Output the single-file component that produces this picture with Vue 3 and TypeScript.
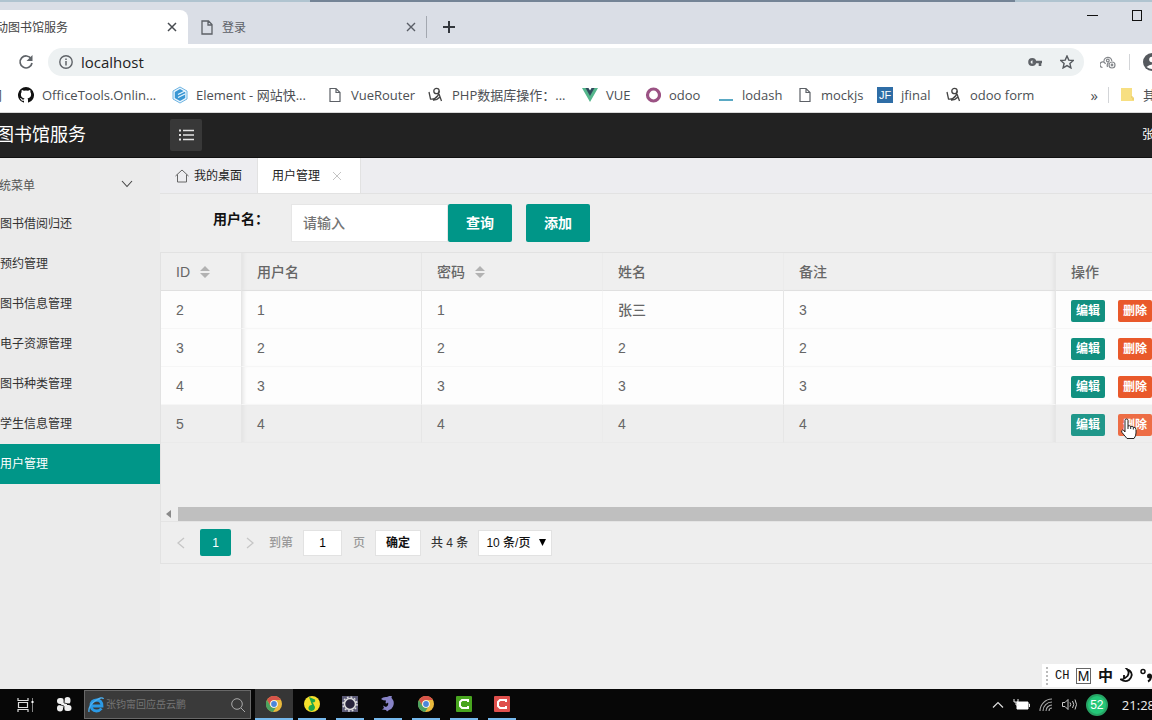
<script setup lang="ts">
import { ref } from 'vue'

interface Bookmark { icon: string; label: string }
interface User { id: number; username: string; password: string; name: string; remark: string }

const bookmarks: Bookmark[] = [
  { icon: 'github', label: 'OfficeTools.Onlin...' },
  { icon: 'element', label: 'Element - 网站快...' },
  { icon: 'page', label: 'VueRouter' },
  { icon: 'sketch', label: 'PHP数据库操作：...' },
  { icon: 'vue', label: 'VUE' },
  { icon: 'ring', label: 'odoo' },
  { icon: 'dash', label: 'lodash' },
  { icon: 'page', label: 'mockjs' },
  { icon: 'jf', label: 'jfinal' },
  { icon: 'sketch', label: 'odoo form' },
]

const menu: string[] = ['图书借阅归还', '预约管理', '图书信息管理', '电子资源管理', '图书种类管理', '学生信息管理', '用户管理']
const activeMenu = ref('用户管理')

const users: User[] = [
  { id: 2, username: '1', password: '1', name: '张三', remark: '3' },
  { id: 3, username: '2', password: '2', name: '2', remark: '2' },
  { id: 4, username: '3', password: '3', name: '3', remark: '3' },
  { id: 5, username: '4', password: '4', name: '4', remark: '4' },
]
const hoveredId = ref(5)
const keyword = ref('')
const page = ref('1')
const pageSize = ref('10')
const tasks: string[] = ['chrome', 'music', 'gear', 'dolphin', 'chrome', 'camgreen', 'camred']
</script>

<template>
  <div class="desktop">
    <header class="tabstrip">
      <div class="btab current">
        <span class="btitle">动图书馆服务</span>
        <button class="plain" aria-label="关闭标签页"><svg width="10" height="10" viewBox="0 0 10 10"><path d="M1 1l8 8M9 1l-8 8" stroke="#474b50" stroke-width="1.5" /></svg></button>
      </div>
      <div class="btab other">
        <svg width="12" height="15" viewBox="0 0 12 15"><path d="M1 1h6.500l3.500 3.500v9.500H1zM7 1v4h4" fill="none" stroke="#5c6066" stroke-width="1.3" /></svg>
        <span class="btitle">登录</span>
        <button class="plain" aria-label="关闭标签页"><svg width="10" height="10" viewBox="0 0 10 10"><path d="M1 1l8 8M9 1l-8 8" stroke="#5a5e66" stroke-width="1.4" /></svg></button>
      </div>
      <button class="plain newtab" aria-label="新标签页"><svg width="12" height="12" viewBox="0 0 12 12"><path d="M6 0v12M0 6h12" stroke="#33373d" stroke-width="2" /></svg></button>
      <div class="winbtns">
        <button class="plain" aria-label="最小化"><svg width="11" height="11" viewBox="0 0 11 11"><path d="M0 5.500h11" stroke="#111" /></svg></button>
        <button class="plain" aria-label="最大化"><svg width="11" height="11" viewBox="0 0 11 11"><rect x=".5" y=".5" width="9" height="10" fill="none" stroke="#111" /></svg></button>
      </div>
    </header>

    <div class="toolbar">
      <button class="plain reload" aria-label="重新加载"><svg width="16" height="16" viewBox="0 0 16 16"><path d="M13.200 4.800A6 6 0 1 0 14 9" fill="none" stroke="#5f6368" stroke-width="1.700" /><path d="M14.500 1v6h-6z" fill="#5f6368" /></svg></button>
      <div class="omnibox">
        <svg width="14" height="14" viewBox="0 0 14 14"><circle cx="7" cy="7" r="6.200" fill="none" stroke="#5f6368" stroke-width="1.400" /><path d="M7 6v4.500M7 3.500v1.500" stroke="#5f6368" stroke-width="1.500" /></svg>
        <input aria-label="地址" value="localhost" />
        <svg width="15" height="10" viewBox="0 0 15 10"><path d="M4.500 5H14M12 5v4" stroke="#5f6368" stroke-width="2.600" fill="none" /><circle cx="4.200" cy="5" r="2.800" fill="none" stroke="#5f6368" stroke-width="2.400" /></svg>
        <svg width="14" height="14" viewBox="0 0 14 14"><path d="M7 1l1.800 4.100 4.500.400-3.400 3 1 4.400L7 10.600l-3.900 2.300 1-4.400-3.400-3 4.500-.400z" fill="none" stroke="#55595e" stroke-width="1.400" /></svg>
      </div>
      <svg class="ext" width="16" height="13" viewBox="0 0 16 13"><g fill="none" stroke="#85888c" stroke-width="1.200"><path d="M2.500 11.500a2.800 2.800 0 1 1 3-3.500M4 5.500a3.800 3.800 0 0 1 7.800-.500" /><circle cx="7.800" cy="4.500" r="1.400" /><circle cx="12" cy="9" r="3" /><circle cx="12" cy="9" r=".8" /><path d="M8.500 6.500a4 4 0 0 0-1 4.500" /></g></svg>
      <span class="vsep"></span>
      <svg class="avatar" width="18" height="18" viewBox="0 0 18 18"><circle cx="9" cy="9" r="9" fill="#55595e" /><circle cx="9" cy="6.500" r="2.800" fill="#fff" /><path d="M3.500 14q5.500-5 11 0q-5 4-11 0" fill="#fff" /></svg>
    </div>

    <nav class="bookmarks">
      <span class="cutmark">网</span>
      <div class="marks">
        <a v-for="b in bookmarks" :key="b.label" href="#" class="mark">
          <svg width="16" height="18" viewBox="0 0 16 18">
            <path v-if="b.icon === 'github'" transform="translate(0 1)" d="M8 0a8 8 0 0 0-2.500 15.600c.4.100.500-.200.500-.400v-1.500c-2 .400-2.600-.500-2.800-1-.1-.200-.500-1-.900-1.200-.300-.200-.700-.600 0-.600s1.100.600 1.300.8c.700 1.200 1.900.9 2.400.700.100-.500.300-.9.500-1.100-1.800-.200-3.600-.9-3.600-4 0-.9.300-1.600.800-2.200-.100-.200-.400-1 .100-2.100 0 0 .700-.200 2.200.8a7.600 7.600 0 0 1 4 0c1.500-1 2.200-.8 2.200-.8.400 1.100.200 1.900.100 2.100.500.600.8 1.300.8 2.200 0 3.100-1.900 3.800-3.700 4 .300.200.600.7.600 1.500v2.400c0 .200.100.5.500.4A8 8 0 0 0 8 0z" fill="#111" />
            <g v-else-if="b.icon === 'element'"><path d="M8 1l7 4v8l-7 4-7-4V5z" fill="#eaf5fd" stroke="#6db4e3" /><path d="M8 3l5.200 3v6L8 15l-5.200-3V6z" fill="#3a97d4" /><path d="M6 8.500l7-3.500M6 11.500l7-3.500" stroke="#eaf5fd" stroke-width="1.200" /></g>
            <path v-else-if="b.icon === 'page'" d="M3 2.500h6l4 4v9H3zM9 2.500v4h4" fill="none" stroke="#5c6066" stroke-width="1.200" />
            <g v-else-if="b.icon === 'sketch'" fill="none" stroke="#444" stroke-width="1.300"><circle cx="8.500" cy="5" r="2.700" /><path d="M1 6l1.500 7q4 1 7.500-3.500L11.200 5M11 8l2.500 7M5 14q4 .3 7-3" /></g>
            <g v-else-if="b.icon === 'vue'"><path d="M0 2h4l4 6.500L12 2h4L8 16z" fill="#55b68c" /><path d="M3.500 2H6.500L8 4.500 9.500 2h3L8 10z" fill="#2f4b5c" /></g>
            <circle v-else-if="b.icon === 'ring'" cx="8.500" cy="9" r="6" fill="none" stroke="#9b5284" stroke-width="3.200" />
            <path v-else-if="b.icon === 'dash'" d="M1 14h14" stroke="#5aa9c4" stroke-width="2" />
            <g v-else><rect y="1" width="16" height="16" fill="#2e6da6" /><text x="2" y="13" font-size="11" fill="#fff" font-family="Liberation Sans, sans-serif">JF</text></g>
          </svg>
          <span>{{ b.label }}</span>
        </a>
      </div>
      <button class="plain more" aria-label="更多书签">»</button>
      <span class="vsep"></span>
      <a href="#" class="mark folder"><svg width="13" height="15" viewBox="0 0 13 15"><path d="M0 1h11v10h2v3H0z" fill="#f7df82" /><path d="M10 10h2v3" fill="none" stroke="#e6c65a" /></svg><span>其</span></a>
    </nav>

    <header class="apphead">
      <h1>图书馆服务</h1>
      <button class="toggle" aria-label="折叠菜单"><svg width="15" height="12" viewBox="0 0 15 12"><path d="M4 1.500h11M4 6h11M4 10.500h11" stroke="#e4e4e4" stroke-width="1.500" /><path d="M0 1.500h2M0 6h2M0 10.500h2" stroke="#e4e4e4" stroke-width="2" /></svg></button>
      <span class="who">张</span>
    </header>

    <div class="main">
      <aside class="sidebar">
        <button class="group"><span>统菜单</span><svg width="12" height="8" viewBox="0 0 12 8"><path d="M1 1l5 5.500L11 1" fill="none" stroke="#444" stroke-width="1.100" /></svg></button>
        <a v-for="m in menu" :key="m" href="#" :class="{ active: m === activeMenu }" @click.prevent="activeMenu = m">{{ m }}</a>
      </aside>

      <main class="content">
        <div class="pagetabs">
          <a href="#" class="ptab"><svg width="14" height="14" viewBox="0 0 14 14"><path d="M.5 7L7 1l6.500 6M2.500 5.500v7.500h9V5.500" fill="none" stroke="#666" /></svg>我的桌面</a>
          <div class="ptab on">用户管理<button class="plain" aria-label="关闭"><svg width="10" height="10" viewBox="0 0 10 10"><path d="M1 1l8 8M9 1l-8 8" stroke="#c4c4c4" /></svg></button></div>
        </div>

        <form class="search" @submit.prevent>
          <label for="kw">用户名：</label>
          <input id="kw" v-model="keyword" placeholder="请输入" />
          <button class="btn query">查询</button>
          <button type="button" class="btn">添加</button>
        </form>

        <section class="grid">
          <div class="viewport">
            <table>
              <thead>
                <tr>
                  <th class="c-id">ID<svg width="10" height="12" viewBox="0 0 10 12"><path d="M0 5l5-5 5 5zM0 7l5 5 5-5z" fill="#b2b2b2" /></svg></th>
                  <th class="c-user first">用户名</th>
                  <th class="c-mid">密码<svg width="10" height="12" viewBox="0 0 10 12"><path d="M0 5l5-5 5 5zM0 7l5 5 5-5z" fill="#b2b2b2" /></svg></th>
                  <th class="c-mid">姓名</th>
                  <th class="c-rest">备注</th>
                  <th class="c-op">操作</th>
                </tr>
              </thead>
              <tbody>
                <tr v-for="u in users" :key="u.id" :class="{ hover: u.id === hoveredId }">
                  <td class="c-id">{{ u.id }}</td>
                  <td class="first">{{ u.username }}</td>
                  <td class="soft">{{ u.password }}</td>
                  <td>{{ u.name }}</td>
                  <td class="c-rest">{{ u.remark }}</td>
                  <td class="c-op">
                    <div class="ops">
                      <button class="mini edit">编辑</button>
                      <button class="mini del">删除</button>
                      <svg v-if="u.id === hoveredId" class="pointer" width="18" height="22" viewBox="0 0 18 22"><path d="M5 13V2.500a1.500 1.500 0 0 1 3 0V8q1.500-.800 2.700.500 1.500-.700 2.600.600 2.700-.200 2.700 2.400v3.500q0 3-2 5.500H7L2 14.500q-1.200-2 .5-2.500 1-.2 2.500 2z" fill="#fff" stroke="#222" /><path d="M8 8v3M10.700 8.500V11M13.300 9.200V11.500" stroke="#222" /></svg>
                    </div>
                  </td>
                </tr>
              </tbody>
            </table>
          </div>
          <div class="hscroll"><svg width="5" height="8" viewBox="0 0 5 8"><path d="M5 0v8L0 4z" fill="#8a8a8a" /></svg><span class="thumb"></span></div>
          <div class="pager">
            <button class="plain arrow" aria-label="上一页"><svg width="8" height="12" viewBox="0 0 8 12"><path d="M7 1L1 6l6 5" fill="none" stroke="#c6c6c6" stroke-width="1.300" /></svg></button>
            <button class="cur">1</button>
            <button class="plain arrow" aria-label="下一页"><svg width="8" height="12" viewBox="0 0 8 12"><path d="M1 1l6 5-6 5" fill="none" stroke="#c6c6c6" stroke-width="1.300" /></svg></button>
            <label for="pg">到第</label>
            <input id="pg" v-model="page" />
            <span class="unit">页</span>
            <button class="ok">确定</button>
            <span class="total">共 4 条</span>
            <span class="size">
              <select v-model="pageSize" aria-label="每页条数"><option value="10">10 条/页</option><option value="20">20 条/页</option></select>
              <svg width="7" height="7" viewBox="0 0 7 7"><path d="M0 0h7L3.500 7z" fill="#000" /></svg>
            </span>
          </div>
        </section>
      </main>
    </div>

    <div class="ime">
      <span class="grip"></span><span class="ch">CH</span><span class="m">M</span><b>中</b>
      <svg width="13" height="15" viewBox="0 0 13 15"><path d="M7 1q3 3 .500 7Q5 11 1 11.500q4 3 8 .500 5-5 1-9Q9 1.500 7 1zM4 7v4" fill="none" stroke="#111" stroke-width="1.800" /></svg>
      <svg width="12" height="15" viewBox="0 0 12 15"><circle cx="3" cy="3.500" r="2" fill="none" stroke="#111" stroke-width="1.500" /><circle cx="9.500" cy="8" r="2.500" fill="#111" /><path d="M11 8q0 4-3 5.500" stroke="#111" stroke-width="2" fill="none" /></svg>
    </div>

    <footer class="taskbar">
      <button class="plain" aria-label="任务视图"><svg width="18" height="16" viewBox="0 0 18 16"><path d="M1 1v2.500h10V1M1 15v-2.500h10V15M1.500 5.500h9v5h-9z" fill="none" stroke="#ddd" stroke-width="1.200" /><path d="M15.500 1v14" stroke="#888" /><path d="M14.500 5h2" stroke="#fff" stroke-width="2" /></svg></button>
      <button class="plain pin" aria-label="应用"><svg width="16" height="15" viewBox="0 0 16 15"><g fill="#eee"><rect x="1" y="1" width="7" height="6" rx="3" /><rect x="8.500" y="0" width="6" height="7" rx="3" /><rect x="1" y="8" width="6" height="6.500" rx="3" /><rect x="8" y="8" width="7.500" height="6" rx="3" /><circle cx="8" cy="7.500" r="3" /></g><path d="M8 2v4l5 1M8 13V9L3 7.500" stroke="#111" fill="none" stroke-width=".8" /></svg></button>
      <div class="find">
        <svg width="16" height="16" viewBox="0 0 16 16"><path d="M13.500 11.500Q11.500 14 8.500 14 3 13.500 3 8.500T8.500 3Q14 3.300 14 9H4" fill="none" stroke="#2b9ae6" stroke-width="2.800" /><path d="M1 15Q0 9 7 4t8.500-2" fill="none" stroke="#4db0f0" stroke-width="1.300" /></svg>
        <input aria-label="搜索" placeholder="张钧甯回应岳云鹏" />
        <svg width="14" height="14" viewBox="0 0 14 14"><circle cx="6" cy="6" r="5.300" fill="none" stroke="#aaa" /><path d="M10 10l4 4" stroke="#aaa" /></svg>
      </div>
      <div class="tasks">
        <button v-for="(t, i) in tasks" :key="i" class="plain task" :class="{ open: i === 0 }" :aria-label="t">
          <svg width="16" height="16" viewBox="0 0 16 16">
            <g v-if="t === 'chrome'"><circle cx="8" cy="8" r="8" fill="#e9b93c" /><path d="M1 4a8 8 0 0 1 14 0H8a4 4 0 0 0-3.700 5.500z" fill="#d6544a" /><path d="M1 4a8 8 0 0 0 6 12l3.500-5.500A4 4 0 0 1 4.500 10z" fill="#4ba260" /><circle cx="8" cy="8" r="3.800" fill="#fff" /><circle cx="8" cy="8" r="2.900" fill="#4b86d8" /></g>
            <g v-else-if="t === 'music'"><circle cx="8" cy="8" r="8" fill="#f4e02c" /><path d="M5 1l6 2.500q1 2-1 3l-1.500-.500L11 11q0 3.500-3.500 4-3.500-.500-3-3.500T8 9z" fill="#1ca64c" /></g>
            <g v-else-if="t === 'gear'"><rect width="16" height="16" fill="#5b5a76" /><circle cx="8" cy="8" r="5.500" fill="#28243c" stroke="#ddd" stroke-width="1.500" /><circle cx="8" cy="8" r="7" fill="none" stroke="#ddd" stroke-width="1.500" stroke-dasharray="1.800 1.900" /></g>
            <path v-else-if="t === 'dolphin'" d="M1 3q2-2.500 6-2 2-1.500 5-1-1 1.500 0 2.500 3 3.500 1 8-1 2.500-4 3.500l-2 1.500-1-1.500-4-.500 2-1.500-1-2.500 3 1.500q3-1.500 2-4.500-1.500 1.500-2.500.500L6 4.500Q3 4.500 1 3z" fill="#8783c6" />
            <g v-else><rect width="16" height="16" rx="1" :class="t" /><path d="M12 6V4H6L4 6v4l2 2h6v-2" fill="none" stroke="#fff" stroke-width="2" /></g>
          </svg>
        </button>
      </div>
      <div class="tray">
        <svg width="12" height="7" viewBox="0 0 12 7"><path d="M1 6.500l5-5 5 5" fill="none" stroke="#ddd" stroke-width="1.200" /></svg>
        <svg width="17" height="13" viewBox="0 0 17 13"><path d="M4 4h11v7H4z" fill="#fff" stroke="#fff" /><path d="M15.500 6h1v3M1 1v3h4V1M3 4v3h3" fill="none" stroke="#eee" /></svg>
        <svg width="14" height="14" viewBox="0 0 14 14"><path d="M1 13A12 12 0 0 1 13 1M4 13a9 9 0 0 1 9-9M7 13a6 6 0 0 1 6-6M10 13a3 3 0 0 1 3-3" fill="none" stroke="#aaa" stroke-width="1.100" /></svg>
        <svg width="15" height="13" viewBox="0 0 15 13"><path d="M.5 4.500H3L6 1.500v10L3 8.500H.5zM8 4.500q1.500 2 0 4M10.500 3q2.500 3.500 0 7M13 1.500q3 5 0 10" fill="none" stroke="#ccc" /></svg>
        <span class="badge">52</span>
        <span class="clock">21:28</span>
      </div>
    </footer>
  </div>
</template>

<style>
html, body { margin: 0; overflow: hidden; }
</style>

<style scoped>
.desktop { position: relative; display: flex; flex-direction: column; height: 100vh; overflow: hidden; background: #eee; color: #333; font: 12px/20px "Liberation Sans", "Noto Sans CJK SC", sans-serif; }
.desktop * { box-sizing: border-box; }
svg { display: block; flex: none; }
a { color: inherit; text-decoration: none; }
button, input, select { font: inherit; margin: 0; border-radius: 0; outline: 0; }
.plain { padding: 0; border: 0; background: none; color: inherit; }

.tabstrip { display: flex; flex: none; align-items: stretch; height: 44px; padding-top: 8px; border-top: 2px solid #748496; border-image: linear-gradient(90deg, #b0c4d0 27%, #748496 27%, #748496 88%, #b0c4d0 88%) 2; background: #dadee6; }
.btab { display: flex; align-items: center; }
.btitle { flex: 1; padding-top: 2px; white-space: nowrap; }
.current { width: 188px; padding-right: 11px; background: #fff; border-radius: 0 8px 0 0; }
.current .btitle { margin-left: -4px; color: #444; }
.other { width: 239px; padding: 0 10px 0 13px; border-right: 1px solid #a3a8b0; margin: 6px 0; }
.other .btitle { margin-left: 9px; color: #5c6066; }
.newtab { padding: 0 16px; }
.winbtns { display: flex; align-items: flex-start; gap: 34px; margin-left: auto; padding-right: 9px; }

.toolbar { display: flex; flex: none; align-items: center; height: 36px; background: #fff; overflow: hidden; }
.reload { margin: 0 14px 0 18px; }
.omnibox { display: flex; flex: 1; align-items: center; gap: 17px; height: 28px; padding: 0 10px 0 11px; border-radius: 14px; background: #edf1f2; }
.omnibox input { flex: 1; margin-left: -9px; padding: 0; border: 0; background: none; color: #222; font: 15px/20px "Open Sans", "Noto Sans CJK SC", sans-serif; }
.ext { margin: 0 13px 0 16px; }
.vsep { flex: none; width: 1px; height: 16px; background: #d3d5d8; }
.avatar { margin: 0 -9px 0 13px; }

.bookmarks { display: flex; flex: none; align-items: center; height: 33px; padding-bottom: 3px; background: #fff; border-bottom: 1px solid #d8d8d8; color: #4c4f54; font: 13px/20px "Open Sans", "Noto Sans CJK SC", sans-serif; white-space: nowrap; overflow: hidden; }
.cutmark { flex: none; width: 18px; text-indent: -11px; }
.marks { display: grid; flex: 1; grid-template-columns: 154px 155px 101px 154px 63px 73px 79px 80px 69px auto; }
.mark { display: flex; align-items: center; gap: 8px; min-width: 0; }
.more { margin-right: 10px; font-size: 15px; }
.folder { flex: none; gap: 9px; margin-left: 12px; width: 31px; }

.apphead { display: flex; flex: none; align-items: center; height: 45px; background: #222; color: #fff; overflow: hidden; border-bottom: 1px solid #111; }
h1 { width: 174px; margin: 0 0 0 -4px; font-size: 18px; line-height: 44px; font-weight: 400; }
.toggle { display: flex; align-items: center; justify-content: center; width: 32px; height: 32px; padding: 0; border: 0; border-radius: 2px; background: #383838; }
.who { margin-left: auto; margin-right: -2px; }

.main { display: flex; flex: 1; min-height: 0; }
.sidebar { display: flex; flex: none; flex-direction: column; width: 160px; padding-top: 6px; background: #ebebeb; overflow: hidden; }
.sidebar a { padding-top: 1px; line-height: 39px; color: #333; }
.sidebar a.active { background: #009688; color: #fff; }
.group { display: flex; align-items: center; justify-content: space-between; height: 40px; padding: 0 27px 0 0; border: 0; background: none; color: #555; }
.group span { margin-left: -1px; padding-top: 4px; }
.content { flex: 1; min-width: 0; background: #eee; }
.pagetabs { display: flex; height: 36px; background: #ededf0; border-bottom: 1px solid #e2e2e2; color: #222; }
.ptab { display: flex; align-items: center; gap: 5px; padding: 0 15px; border-right: 1px solid #e2e2e2; }
.ptab.on { gap: 12px; padding: 0 18px 0 14px; background: #fff; }

.search { display: flex; align-items: center; height: 58px; font-size: 14px; font-weight: 500; }
.search label { width: 131px; padding: 0 0 8px 53px; color: #111; font-weight: 700; white-space: nowrap; }
.search input { width: 157px; height: 38px; padding: 0 11px; border: 1px solid #e6e6e6; background: #fff; }
.search input::placeholder { color: #757575; opacity: 1; }
.btn { width: 64px; height: 38px; padding: 0; border: 0; border-radius: 2px; background: #009688; color: #fff; font-weight: 700; }
.query { margin-right: 14px; }

.grid { border: 1px solid #e2e2e2; border-right: 0; }
.viewport { height: 254px; overflow: hidden; }
table { width: 100%; border-collapse: separate; border-spacing: 0; table-layout: fixed; color: #666; font-size: 14px; font-weight: 500; }
th, td { height: 38px; padding: 0 15px; border-right: 1px solid #e6e6e6; border-bottom: 1px solid #f6f6f6; background: #fdfdfd; text-align: left; white-space: nowrap; font-weight: 500; }
th { background: #efefef; border-bottom-color: #e0e0e0; }
th svg { display: inline-block; margin-left: 10px; vertical-align: -1px; }
td.soft { border-right-color: #f6f6f6; }
th.c-mid { border-right-color: #ebebeb; }
.hover td { background: #eee; border-bottom-color: #eaeaea; }
.hover td.soft { border-right-color: #ebebeb; }
.c-id { width: 81px; }
.c-user { width: 180px; }
.c-mid { width: 181px; }
.first { box-shadow: inset 4px 0 4px -3px #e0e0e0; }
.c-rest { box-shadow: inset -4px 0 4px -3px #e0e0e0; }
.c-op { width: 96px; border-right: 0; padding-right: 0; }
.ops { position: relative; display: flex; gap: 13px; padding-top: 3px; }
.mini { flex: none; width: 34px; height: 22px; padding: 0; border: 0; border-radius: 2px; background: #129080; color: #fff; font-size: 12px; line-height: 22px; font-weight: 700; }
.del { background: #e9592b; }
.hover .edit { background: #20978a; }
.hover .del { background: #ed6d45; }
.pointer { position: absolute; left: 49px; top: 7px; }
.hscroll { display: flex; align-items: center; gap: 7px; height: 15px; padding-left: 5px; border-bottom: 1px solid #e4e4e4; }
.thumb { flex: 1; height: 14px; background: #bfbfbf; }

.pager { display: flex; align-items: center; height: 41px; padding-left: 7px; color: #333; font-weight: 500; white-space: nowrap; }
.arrow { display: flex; justify-content: center; width: 26px; }
.cur { width: 31px; height: 27px; margin: 0 6px; padding: 0; border: 0; border-radius: 2px; background: #009688; color: #fff; }
.pager label { margin: 0 10px 0 6px; color: #999; }
.pager input { width: 39px; height: 26px; padding: 0; border: 1px solid #e2e2e2; background: #fff; text-align: center; }
.unit { margin: 0 10px 0 11px; color: #999; }
.ok { width: 46px; height: 26px; padding: 0; border: 1px solid #e2e2e2; background: #fff; color: #111; font-weight: 700; }
.total { margin: 0 10px; }
.size { position: relative; }
.size select { appearance: none; display: block; width: 74px; height: 26px; padding: 0 7px; border: 1px solid #e2e2e2; background: #fff; color: #111; }
.size svg { position: absolute; right: 6px; top: 9px; }

.ime { position: absolute; right: 0; bottom: 33px; display: flex; align-items: center; gap: 7px; height: 23px; width: 110px; padding-left: 4px; background: #fff; color: #111; overflow: hidden; }
.grip { height: 18px; border-left: 2px dotted #bbb; }
.ch { font: 12px/20px "Liberation Mono", monospace; }
.m { width: 16px; height: 16px; border: 1px solid #666; line-height: 14px; font-size: 14px; text-align: center; }
.ime b { font-size: 15px; }

.taskbar { display: flex; flex: none; align-items: center; height: 31px; padding-left: 17px; background: #070707; color: #eee; }
.pin { margin: 0 12px 0 21px; }
.find { display: flex; align-items: center; width: 167px; height: 29px; padding: 0 5px 0 3px; border: 1px solid #686868; background: #3a3a3a; }
.find input { flex: 1; width: 0; padding: 0 0 0 2px; border: 0; background: none; color: #ccc; font-size: 10px; }
.find input::placeholder { color: #757575; opacity: 1; }
.tasks { display: flex; align-self: stretch; margin-left: 4px; }
.task { display: flex; align-items: center; justify-content: center; width: 38px; padding-bottom: 1px; box-shadow: inset 5px 0 #070707, inset -5px 0 #070707, inset 0 -2px #76b9ed; }
.open { background: #363636; box-shadow: inset 0 -2px #76b9ed; }
.camgreen { fill: #48a51f; }
.camred { fill: #df4f4c; }
.tray { display: flex; align-items: center; gap: 9px; margin-left: auto; margin-right: -3px; }
.badge { width: 22px; height: 22px; border: 2px solid #27a364; border-radius: 50%; background: #24c878; color: #fff; font-size: 12px; line-height: 18px; text-align: center; }
.clock { margin-left: 5px; font: 13px/20px "Open Sans", sans-serif; }
</style>
